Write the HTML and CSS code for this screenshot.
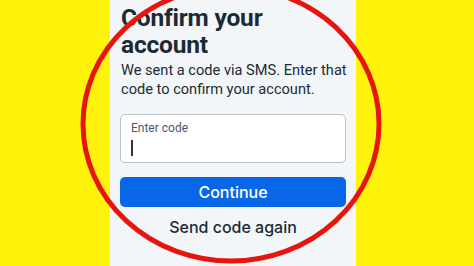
FILE: index.html
```html
<!DOCTYPE html>
<html lang="en">
<head>
    <meta charset="UTF-8">
    <meta name="viewport" content="width=device-width, initial-scale=1.0">
    <title>Confirm your account</title>
    <link rel="stylesheet" href="styles.css">
</head>
<body>
    <div class="stage">
        <div class="side side-left"></div>
        <!-- phone screen -->
        <div class="panel">
            <h1 class="title">Confirm your<br>account</h1>
            <p class="intro">We sent a code via SMS. Enter that code to confirm your account.</p>
            <div class="field">
                <span class="field-label">Enter code</span>
                <span class="caret"></span>
            </div>
            <button class="btn-primary">Continue</button>
            <button class="btn-link">Send code again</button>
        </div>
        <div class="side"></div>
        <!-- red marker circle -->
        <svg class="marker" width="474" height="266" viewBox="0 0 474 266">
            <ellipse cx="231" cy="124" rx="148" ry="137" fill="none" stroke="#e8150f" stroke-width="5"/>
        </svg>
    </div>
</body>
</html>
```

FILE: styles.css
```css
/* page */
body, html {
    margin: 0;
    padding: 0;
    height: 100%;
    overflow: hidden;
    font-family: Roboto, "Liberation Sans", sans-serif;
}
.stage {
    position: relative;
    display: flex;
    width: 474px;
    height: 266px;
    background: #fff30b;
}
.side {
    flex: 1;
}
.side-left {
    flex: 0 0 110px;
}
/* phone screen */
.panel {
    width: 246px;
    box-sizing: border-box;
    padding: 4px 10px 0 10px;
    background: #f3f6f9;
    display: flex;
    flex-direction: column;
}
.title {
    margin: 0 0 0 1px;
    font-family: Roboto, sans-serif;
    font-size: 24.5px;
    line-height: 27px;
    font-weight: 700;
    color: #1c2b33;
    letter-spacing: -0.2px;
}
.intro {
    margin: 3px -6px 0 1px;
    font-size: 14.6px;
    line-height: 19px;
    color: #1c2b33;
}
.field {
    margin-top: 15px;
    height: 49px;
    box-sizing: border-box;
    padding: 6px 10px;
    background: #fff;
    border: 1px solid #bcc0c4;
    border-radius: 5px;
    display: flex;
    flex-direction: column;
}
.field-label {
    font-size: 12px;
    line-height: 14px;
    color: #465a69;
}
.caret {
    margin-top: 5px;
    width: 2px;
    height: 20px;
    background: #333;
}
.btn-primary {
    margin-top: 14px;
    height: 30px;
    border: none;
    border-radius: 5px;
    background: #0866e8;
    color: #fff;
    font-family: Inter, Roboto, sans-serif;
    font-size: 16px;
    font-weight: 500;
}
.btn-link {
    margin-top: 9px;
    border: none;
    background: none;
    color: #1c2b33;
    font-family: Inter, Roboto, sans-serif;
    font-size: 16px;
    font-weight: 500;
}
.marker {
    position: absolute;
    left: 0;
    top: 0;
}
```
